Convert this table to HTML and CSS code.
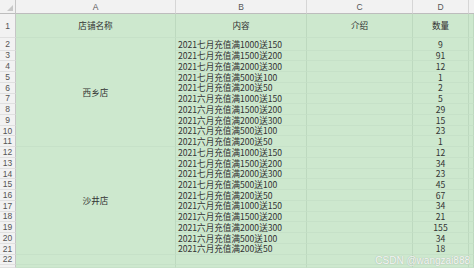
FILE: index.html
```html
<!DOCTYPE html>
<html lang="zh-CN">
<head>
<meta charset="utf-8">
<link rel="stylesheet" href="styles.css">
</head>
<body>
<div class="sheet">
  <div class="corner"><span class="tri"></span></div>
  <div class="colh">A</div>
  <div class="colh">B</div>
  <div class="colh">C</div>
  <div class="colh">D</div>
  <div class="colh last"></div>

  <div class="rowh">1</div>
  <div class="cell center">店铺名称</div>
  <div class="cell center">内容</div>
  <div class="cell center">介绍</div>
  <div class="cell center">数量</div>
  <div class="cell"></div>

  <div class="rowh">2</div>
  <div class="cell center merged">西乡店</div>
  <div class="cell txt">2021七月充值满1000送150</div><div class="cell"></div><div class="cell center">9</div><div class="cell"></div>
  <div class="rowh">3</div>
  <div class="cell txt">2021七月充值满1500送200</div><div class="cell"></div><div class="cell center">91</div><div class="cell"></div>
  <div class="rowh">4</div>
  <div class="cell txt">2021七月充值满2000送300</div><div class="cell"></div><div class="cell center">12</div><div class="cell"></div>
  <div class="rowh">5</div>
  <div class="cell txt">2021七月充值满500送100</div><div class="cell"></div><div class="cell center">1</div><div class="cell"></div>
  <div class="rowh">6</div>
  <div class="cell txt">2021七月充值满200送50</div><div class="cell"></div><div class="cell center">2</div><div class="cell"></div>
  <div class="rowh">7</div>
  <div class="cell txt">2021六月充值满1000送150</div><div class="cell"></div><div class="cell center">5</div><div class="cell"></div>
  <div class="rowh">8</div>
  <div class="cell txt">2021六月充值满1500送200</div><div class="cell"></div><div class="cell center">29</div><div class="cell"></div>
  <div class="rowh">9</div>
  <div class="cell txt">2021六月充值满2000送300</div><div class="cell"></div><div class="cell center">15</div><div class="cell"></div>
  <div class="rowh">10</div>
  <div class="cell txt">2021六月充值满500送100</div><div class="cell"></div><div class="cell center">23</div><div class="cell"></div>
  <div class="rowh">11</div>
  <div class="cell txt">2021六月充值满200送50</div><div class="cell"></div><div class="cell center">1</div><div class="cell"></div>

  <div class="rowh">12</div>
  <div class="cell center merged">沙井店</div>
  <div class="cell txt">2021七月充值满1000送150</div><div class="cell"></div><div class="cell center">12</div><div class="cell"></div>
  <div class="rowh">13</div>
  <div class="cell txt">2021七月充值满1500送200</div><div class="cell"></div><div class="cell center">34</div><div class="cell"></div>
  <div class="rowh">14</div>
  <div class="cell txt">2021七月充值满2000送300</div><div class="cell"></div><div class="cell center">23</div><div class="cell"></div>
  <div class="rowh">15</div>
  <div class="cell txt">2021七月充值满500送100</div><div class="cell"></div><div class="cell center">45</div><div class="cell"></div>
  <div class="rowh">16</div>
  <div class="cell txt">2021七月充值满200送50</div><div class="cell"></div><div class="cell center">67</div><div class="cell"></div>
  <div class="rowh">17</div>
  <div class="cell txt">2021六月充值满1000送150</div><div class="cell"></div><div class="cell center">34</div><div class="cell"></div>
  <div class="rowh">18</div>
  <div class="cell txt">2021六月充值满1500送200</div><div class="cell"></div><div class="cell center">21</div><div class="cell"></div>
  <div class="rowh">19</div>
  <div class="cell txt">2021六月充值满2000送300</div><div class="cell"></div><div class="cell center">155</div><div class="cell"></div>
  <div class="rowh">20</div>
  <div class="cell txt">2021六月充值满500送100</div><div class="cell"></div><div class="cell center">34</div><div class="cell"></div>
  <div class="rowh">21</div>
  <div class="cell txt">2021六月充值满200送50</div><div class="cell"></div><div class="cell center">18</div><div class="cell"></div>

  <div class="rowh">22</div>
  <div class="cell"></div><div class="cell"></div><div class="cell"></div><div class="cell"></div><div class="cell"></div>
  <div class="rowh"></div>
  <div class="cell"></div><div class="cell"></div><div class="cell"></div><div class="cell"></div><div class="cell"></div>
</div>
<div class="watermark">CSDN @wangzai888</div>
</body>
</html>
```
FILE: styles.css
```css
html, body {
  margin: 0;
  padding: 0;
  width: 474px;
  height: 268px;
  overflow: hidden;
  background: #cde8ce;
}
.sheet {
  display: grid;
  grid-template-columns: 16px 160px 131px 106px 56px 1fr;
  grid-template-rows: 14px 24px 12.6px repeat(20, 10.74px) 1fr;
  height: 268px;
  font-family: "Noto Sans CJK SC", "Noto Sans", sans-serif;
  font-size: 8.6px;
  color: #333;
}
.corner {
  background: #f2f2f2;
  border-right: 1px solid #c6c6c6;
  border-bottom: 1px solid #bdbdbd;
  position: relative;
}
.tri {
  position: absolute;
  right: 2px;
  bottom: 2px;
  width: 0;
  height: 0;
  border-left: 6px solid transparent;
  border-bottom: 6px solid #c8c8c8;
}
.colh {
  background: #f2f2f2;
  border-right: 1px solid #d6d6d6;
  border-bottom: 1px solid #bdbdbd;
  display: flex;
  align-items: center;
  justify-content: center;
  font-family: "Liberation Sans", sans-serif;
  font-size: 8.5px;
  color: #555;
}
.colh.last { border-right: none; }
.rowh {
  background: #f2f2f2;
  border-right: 1px solid #c6c6c6;
  border-bottom: 1px solid #e0e0e0;
  display: flex;
  align-items: center;
  justify-content: center;
  font-family: "Liberation Sans", sans-serif;
  font-size: 8.5px;
  color: #555;
  box-sizing: border-box;
  overflow: hidden;
}
.cell {
  border-right: 1px solid #bdd9bf;
  border-bottom: 1px solid #c6e1c8;
  box-sizing: border-box;
  display: flex;
  align-items: center;
  white-space: nowrap;
  overflow: hidden;
  line-height: 1;
}
.cell.center { justify-content: center; }
.cell.txt { padding-left: 2px; }
.cell.merged { grid-row: span 10; }
.watermark {
  position: absolute;
  right: 4px;
  bottom: 2px;
  font-family: "Liberation Sans", sans-serif;
  font-size: 10px;
  color: rgba(255, 255, 255, 0.9);
  text-shadow: 0 0 1px rgba(110, 110, 110, 0.55);
}
```
